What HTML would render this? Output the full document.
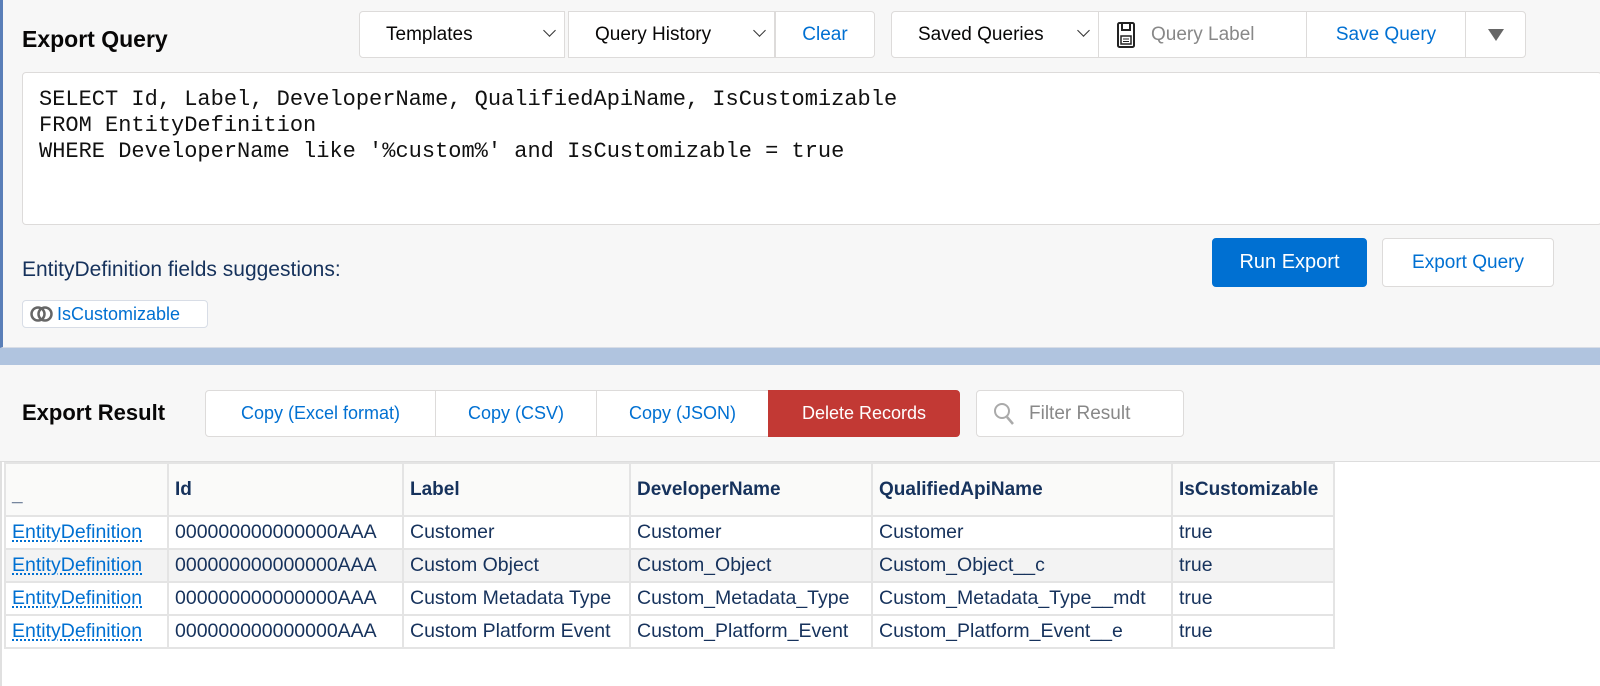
<!DOCTYPE html>
<html><head><meta charset="utf-8"><style>
*{box-sizing:border-box;margin:0;padding:0}
body{width:1600px;height:686px;overflow:hidden;background:#b0c4df;font-family:"Liberation Sans",sans-serif;position:relative;color:#080707}
.a{position:absolute}
.card1{left:0;top:0;width:1600px;height:348px;background:#f7f7f7;border-left:3px solid #5a7fb8;border-bottom:1px solid #d8dde6}
.card2{left:0;top:365px;width:1600px;height:321px;background:#fff;border-top:1px solid #d8dde6;border-left:2px solid #e0e0e0}
.gray2{left:0;top:365px;width:1600px;height:97px;background:#f7f7f7;border-bottom:1px solid #ddd}
.btn{position:absolute;background:#fff;border:1px solid #dddbda;display:flex;align-items:center;justify-content:center;font-size:19px;color:#0070d2}
.sel{justify-content:flex-start;padding-left:26px;color:#080707}
.chev{position:absolute;right:10px;top:14px;width:9px;height:9px;border-right:1.5px solid #333;border-bottom:1.5px solid #333;transform:rotate(45deg)}
.ta{left:22px;top:72px;width:1580px;height:153px;background:#fff;border:1px solid #dddbda;border-radius:4px;font-family:"Liberation Mono",monospace;font-size:22px;line-height:26px;padding:14px 0 0 16px;white-space:pre;color:#111}
table{position:absolute;left:4px;top:462px;border-collapse:collapse;font-size:19.5px;color:#16325c;table-layout:fixed}
td,th{border:2px solid #e4e4e4;white-space:nowrap;overflow:hidden;padding:0 6px;height:33px;text-align:left}
th{height:53px;background:#fafaf9;font-weight:bold;vertical-align:middle;padding-top:0;font-size:19px}
tr.g td{background:#f3f3f3}
a{color:#0070d2;text-decoration:underline dotted;text-underline-offset:3px}
</style></head><body>
<div class="a card1"></div>
<div class="a" style="left:22px;top:26px;font-size:23px;font-weight:bold">Export Query</div>
<div class="btn sel" style="left:359px;top:11px;width:206px;height:47px;border-radius:4px 0 0 4px">Templates<span class="chev"></span></div>
<div class="btn sel" style="left:568px;top:11px;width:207px;height:47px">Query History<span class="chev"></span></div>
<div class="btn" style="left:775px;top:11px;width:100px;height:47px;border-radius:0 4px 4px 0">Clear</div>
<div class="btn sel" style="left:891px;top:11px;width:208px;height:47px;border-radius:4px 0 0 4px">Saved Queries<span class="chev"></span></div>
<div class="btn" style="left:1098px;top:11px;width:209px;height:47px;justify-content:flex-start;padding-left:18px;color:#888">
<svg width="18" height="26" viewBox="0 0 18 26" style="margin-right:16px"><rect x="1" y="1" width="16" height="24" rx="1.5" fill="none" stroke="#222" stroke-width="2"/><rect x="5" y="1" width="8" height="7" fill="none" stroke="#222" stroke-width="2"/><rect x="4" y="14" width="10" height="8" fill="none" stroke="#222" stroke-width="1.5"/><line x1="6" y1="17" x2="12" y2="17" stroke="#222"/><line x1="6" y1="19.5" x2="12" y2="19.5" stroke="#222"/></svg>Query Label</div>
<div class="btn" style="left:1306px;top:11px;width:160px;height:47px">Save Query</div>
<div class="btn" style="left:1465px;top:11px;width:61px;height:47px;border-radius:0 4px 4px 0"><svg width="16" height="12"><polygon points="0,0 16,0 8,12" fill="#666"/></svg></div>
<div class="a ta">SELECT Id, Label, DeveloperName, QualifiedApiName, IsCustomizable
FROM EntityDefinition
WHERE DeveloperName like '%custom%' and IsCustomizable = true</div>
<div class="a" style="left:22px;top:258px;font-size:21px;color:#16325c">EntityDefinition fields suggestions:</div>
<div class="a" style="left:22px;top:300px;width:186px;height:28px;border:1px solid #d8dde6;border-radius:4px;background:#fff;font-size:18px;color:#0070d2;padding:3px 0 0 34px">IsCustomizable</div>
<svg class="a" style="left:30px;top:306px" width="24" height="16"><circle cx="8" cy="8" r="6.5" fill="none" stroke="#666" stroke-width="2.5"/><circle cx="15" cy="8" r="6.5" fill="none" stroke="#666" stroke-width="2.5"/></svg>
<div class="btn" style="left:1212px;top:238px;width:155px;height:49px;background:#0070d2;border-color:#0070d2;color:#fff;border-radius:4px;font-size:20px">Run Export</div>
<div class="btn" style="left:1382px;top:238px;width:172px;height:49px;border-radius:4px;font-size:19px">Export Query</div>

<div class="a card2"></div>
<div class="a gray2"></div>
<div class="a" style="left:22px;top:400px;font-size:22px;font-weight:bold">Export Result</div>
<div class="btn" style="left:205px;top:390px;width:231px;height:47px;border-radius:4px 0 0 4px;font-size:18px">Copy (Excel format)</div>
<div class="btn" style="left:435px;top:390px;width:162px;height:47px;font-size:18px">Copy (CSV)</div>
<div class="btn" style="left:596px;top:390px;width:173px;height:47px;font-size:18px">Copy (JSON)</div>
<div class="btn" style="left:768px;top:390px;width:192px;height:47px;background:#c23934;border-color:#c23934;color:#fff;border-radius:0 4px 4px 0;font-size:18px">Delete Records</div>
<div class="btn" style="left:976px;top:390px;width:208px;height:47px;border-radius:4px;justify-content:flex-start;padding-left:16px;color:#888;font-size:19px">
<svg width="22" height="24" viewBox="0 0 22 24" style="margin-right:14px"><circle cx="9" cy="9" r="7" fill="none" stroke="#aaa" stroke-width="2"/><line x1="14" y1="15" x2="20" y2="22" stroke="#aaa" stroke-width="2.5"/></svg>Filter Result</div>

<table>
<colgroup><col style="width:163px"><col style="width:235px"><col style="width:227px"><col style="width:242px"><col style="width:300px"><col style="width:162px"></colgroup>
<tr><th style="vertical-align:bottom;padding-bottom:8px">_</th><th>Id</th><th>Label</th><th>DeveloperName</th><th>QualifiedApiName</th><th>IsCustomizable</th></tr>
<tr><td><a>EntityDefinition</a></td><td>000000000000000AAA</td><td>Customer</td><td>Customer</td><td>Customer</td><td>true</td></tr>
<tr class="g"><td><a>EntityDefinition</a></td><td>000000000000000AAA</td><td>Custom Object</td><td>Custom_Object</td><td>Custom_Object__c</td><td>true</td></tr>
<tr><td><a>EntityDefinition</a></td><td>000000000000000AAA</td><td>Custom Metadata Type</td><td>Custom_Metadata_Type</td><td>Custom_Metadata_Type__mdt</td><td>true</td></tr>
<tr><td><a>EntityDefinition</a></td><td>000000000000000AAA</td><td>Custom Platform Event</td><td>Custom_Platform_Event</td><td>Custom_Platform_Event__e</td><td>true</td></tr>
</table>
</body></html>
